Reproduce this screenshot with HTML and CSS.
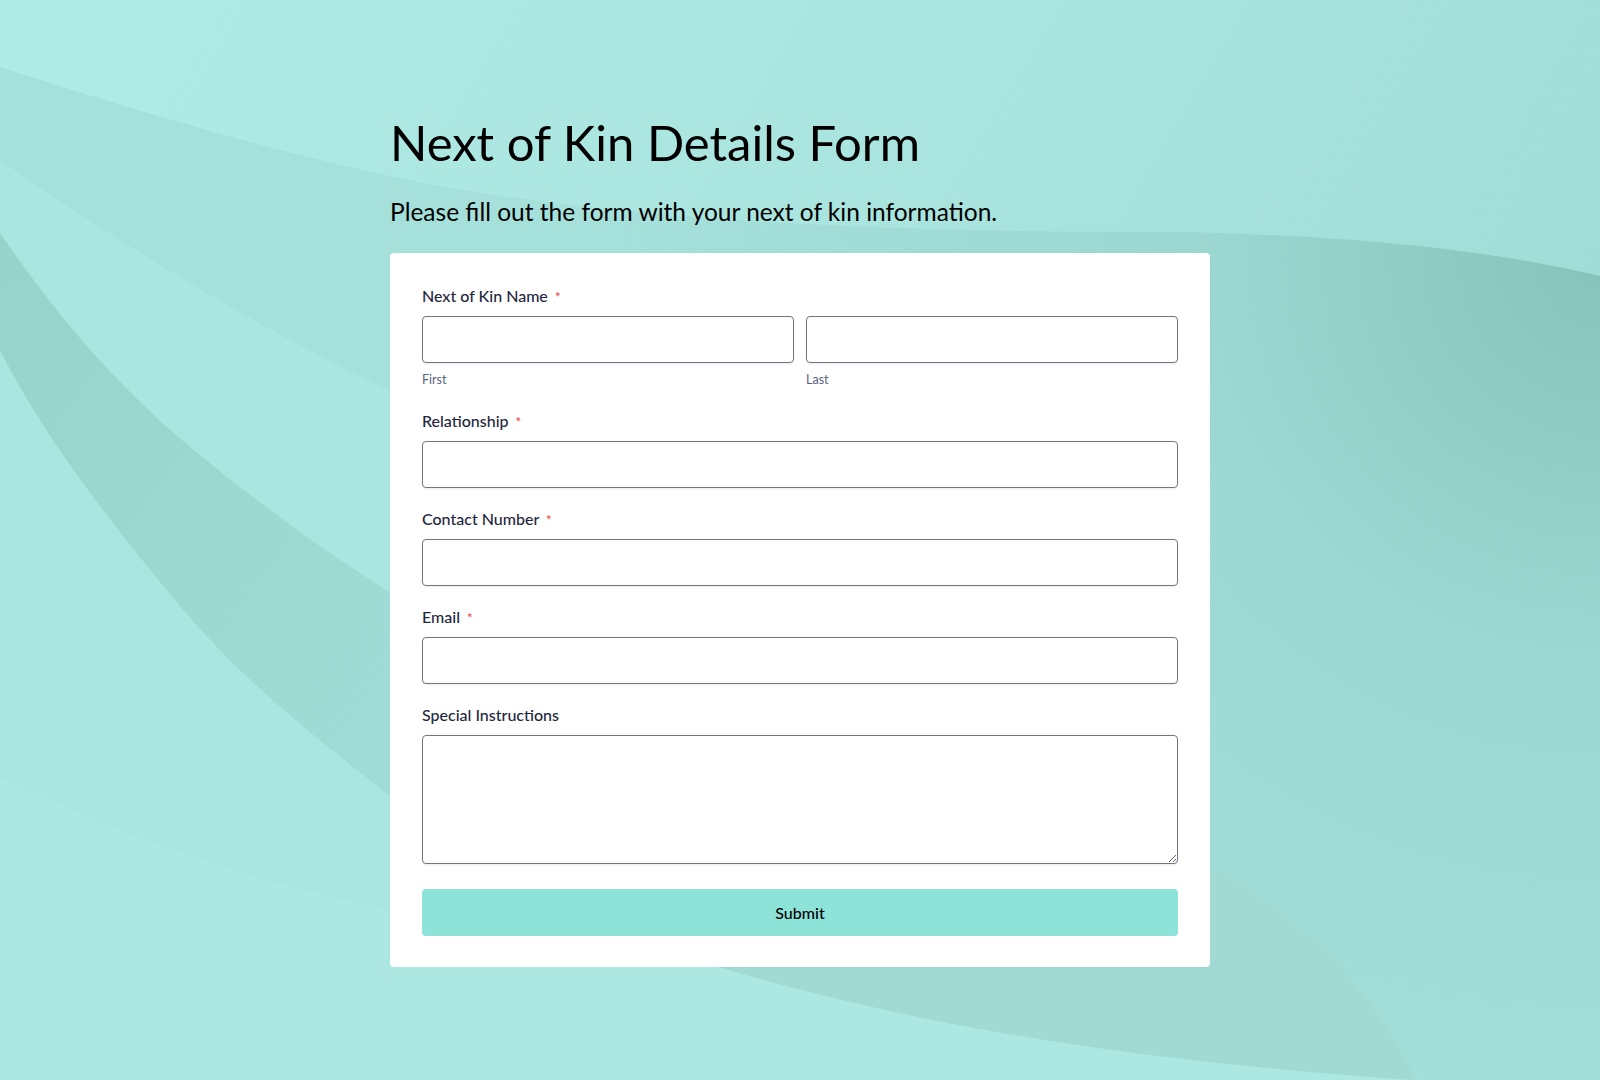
FILE: index.html
```html
<!DOCTYPE html>
<html lang="en">
<head>
    <meta charset="UTF-8">
    <meta name="viewport" content="width=device-width, initial-scale=1.0">
    <title>Next of Kin Details Form</title>
    <link rel="stylesheet" href="styles.css">
</head>
<body>
    <div class="page">
        <svg class="backdrop" viewBox="0 0 1600 1080" preserveAspectRatio="none" aria-hidden="true">
            <defs>
                <linearGradient id="base" x1="0" y1="0" x2="1" y2="0.4">
                    <stop offset="0" stop-color="#b0ebe5"/>
                    <stop offset="0.55" stop-color="#a9e4de"/>
                    <stop offset="1" stop-color="#a0dcd6"/>
                </linearGradient>
                <radialGradient id="shade" cx="1600" cy="260" r="1000" gradientUnits="userSpaceOnUse">
                    <stop offset="0" stop-color="#87c3ba"/>
                    <stop offset="0.4" stop-color="#9cd8d1"/>
                    <stop offset="1" stop-color="#a5e0da"/>
                </radialGradient>
                <linearGradient id="swoosh" x1="0" y1="0" x2="1" y2="1">
                    <stop offset="0" stop-color="#97d3cb"/>
                    <stop offset="1" stop-color="#a2dcd6"/>
                </linearGradient>
            </defs>
            <rect width="1600" height="1080" fill="url(#base)"/>
            <path d="M0,67 C150,115 300,160 450,188 C700,228 950,232 1180,232 C1350,236 1480,248 1600,276 L1600,1080 L0,1080 Z" fill="url(#shade)"/>
            <path d="M0,160 C130,250 260,330 420,405 L700,560 L715,966 C930,1030 1150,1062 1415,1080 L0,1080 Z" fill="#aae5df"/>
            <path d="M0,233 C60,320 120,390 200,455 C260,505 330,555 420,612 L420,820 C320,740 250,690 175,600 C100,510 40,430 0,350 Z" fill="url(#swoosh)"/>
            <path d="M0,777 C150,850 280,890 420,915 C550,940 650,955 715,966 C930,1030 1150,1062 1415,1080 L0,1080 Z" fill="#ace7e1"/>
            <path d="M600,900 L1200,860 C1300,915 1375,990 1415,1080 C1150,1062 930,1030 715,966 Z" fill="#a0dad3"/>
        </svg>

        <main class="content">
            <h1 class="form-title">Next of Kin Details Form</h1>
            <p class="form-subtitle">Please fill out the form with your next of kin information.</p>

            <form class="form-card">
                <div class="field">
                    <label class="field-label">Next of Kin Name <span class="req">*</span></label>
                    <div class="name-row">
                        <div class="name-part">
                            <input type="text" class="input">
                            <span class="sublabel">First</span>
                        </div>
                        <div class="name-part">
                            <input type="text" class="input">
                            <span class="sublabel">Last</span>
                        </div>
                    </div>
                </div>

                <div class="field">
                    <label class="field-label">Relationship <span class="req">*</span></label>
                    <input type="text" class="input">
                </div>

                <div class="field">
                    <label class="field-label">Contact Number <span class="req">*</span></label>
                    <input type="tel" class="input">
                </div>

                <div class="field">
                    <label class="field-label">Email <span class="req">*</span></label>
                    <input type="email" class="input">
                </div>

                <div class="field">
                    <label class="field-label">Special Instructions</label>
                    <textarea class="input textarea"></textarea>
                </div>

                <button type="button" class="submit-btn">Submit</button>
            </form>
        </main>
    </div>
</body>
</html>
```

FILE: styles.css
```css
* {
    box-sizing: border-box;
}
body {
    margin: 0;
    font-family: Lato, "Open Sans", Arial, sans-serif;
    color: #000;
}
.page {
    position: relative;
    min-height: 1080px;
    overflow: hidden;
}
.backdrop {
    position: absolute;
    top: 0;
    left: 0;
    width: 100%;
    height: 100%;
}
.content {
    position: relative;
    width: 820px;
    margin: 0 auto;
    padding-top: 112px;
}
.form-title {
    margin: 0;
    font-size: 49px;
    line-height: 60px;
    font-weight: 400;
    color: #000;
}
.form-subtitle {
    margin: 25px 0 26px;
    font-size: 24.5px;
    line-height: 30px;
    color: #000;
}
.form-card {
    background-color: #fff;
    border-radius: 4px;
    padding: 33px 32px 31px;
}
.field {
    margin-bottom: 21px;
}
.field-label {
    display: block;
    height: 20px;
    font-size: 16px;
    line-height: 20px;
    font-weight: 500;
    color: #1f2740;
    margin-bottom: 10px;
}
.req {
    color: #f23a3c;
    font-size: 13px;
    line-height: 1;
    margin-left: 3px;
}
.name-row {
    display: grid;
    grid-template-columns: 1fr 1fr;
    gap: 12px;
}
.name-part {
    display: flex;
    flex-direction: column;
}
.sublabel {
    margin-top: 9px;
    font-size: 12.5px;
    line-height: 16px;
    color: #57647e;
    margin-bottom: 2px;
}
.input {
    display: block;
    width: 100%;
    height: 47px;
    border: 1px solid #6f7684;
    border-radius: 4px;
    background: #fff;
    box-shadow: 0 1px 2px rgba(0, 0, 0, 0.08);
    font-family: inherit;
    font-size: 15px;
    padding: 0 12px;
}
.textarea {
    height: 129px;
    padding: 10px 12px;
    resize: vertical;
}
.submit-btn {
    display: block;
    width: 100%;
    height: 47px;
    margin-top: 25px;
    border: none;
    border-radius: 4px;
    background-color: #8ee3d8;
    font-family: inherit;
    font-size: 16px;
    font-weight: 500;
    color: #000;
    cursor: pointer;
}
```
